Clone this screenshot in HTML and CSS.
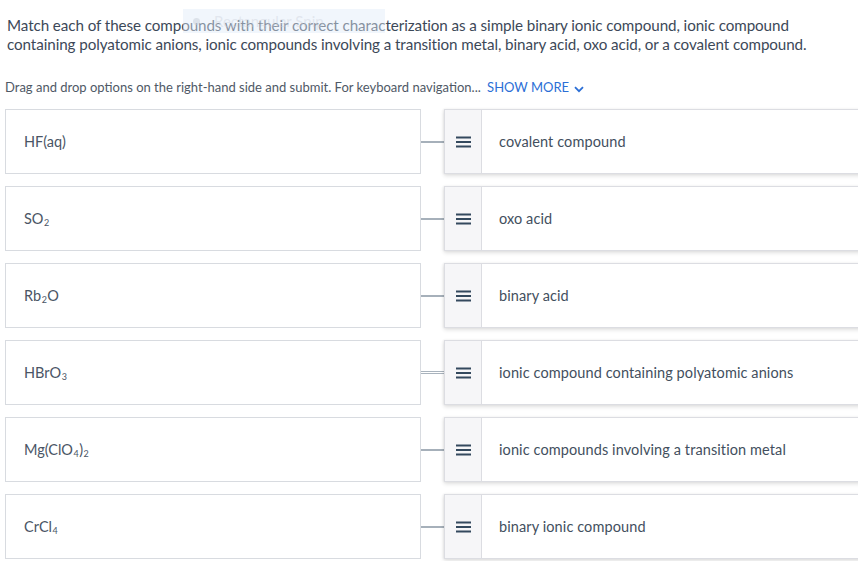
FILE: index.html
```html
<!DOCTYPE html>
<html>
<head>
<meta charset="utf-8">
<link rel="stylesheet" href="styles.css">
</head>
<body>
<div class="page">
  <div class="snip"><span class="snip-dot"></span><span class="snip-text">Rectangular Snip</span></div>
  <p class="title">Match each of these compounds with their correct characterization as a simple binary ionic compound, ionic compound containing polyatomic anions, ionic compounds involving a transition metal, binary acid, oxo acid, or a covalent compound.</p>
  <p class="hint">Drag and drop options on the right-hand side and submit. For keyboard navigation... <span class="more">SHOW MORE <svg class="chev" viewBox="0 0 10 7" width="10" height="7"><path d="M1 1.2 L5 5.2 L9 1.2" fill="none" stroke="#2c6fd6" stroke-width="1.8"/></svg></span></p>
  <div class="rows">
    <div class="row">
      <div class="left">HF(aq)</div>
      <div class="link"></div>
      <div class="right"><div class="handle"><span class="bars"></span></div><div class="label">covalent compound</div></div>
    </div>
    <div class="row">
      <div class="left">SO<sub>2</sub></div>
      <div class="link"></div>
      <div class="right"><div class="handle"><span class="bars"></span></div><div class="label">oxo acid</div></div>
    </div>
    <div class="row">
      <div class="left">Rb<sub>2</sub>O</div>
      <div class="link"></div>
      <div class="right"><div class="handle"><span class="bars"></span></div><div class="label">binary acid</div></div>
    </div>
    <div class="row">
      <div class="left">HBrO<sub>3</sub></div>
      <div class="link double"></div>
      <div class="right"><div class="handle"><span class="bars"></span></div><div class="label">ionic compound containing polyatomic anions</div></div>
    </div>
    <div class="row">
      <div class="left">Mg(ClO<sub>4</sub>)<sub>2</sub></div>
      <div class="link"></div>
      <div class="right"><div class="handle"><span class="bars"></span></div><div class="label">ionic compounds involving a transition metal</div></div>
    </div>
    <div class="row">
      <div class="left">CrCl<sub>4</sub></div>
      <div class="link"></div>
      <div class="right"><div class="handle"><span class="bars"></span></div><div class="label">binary ionic compound</div></div>
    </div>
  </div>
</div>
</body>
</html>
```

FILE: styles.css
```css
html, body {
  margin: 0;
  padding: 0;
  background: #fff;
  overflow: hidden;
}
body {
  font-family: "Lato", "Liberation Sans", sans-serif;
  color: #3f4b5a;
  width: 858px;
  height: 561px;
}
.page {
  position: relative;
  padding: 0 0 0 5px;
}
.snip {
  position: absolute;
  left: 183px;
  top: 9px;
  width: 202px;
  height: 24px;
  background: rgba(225, 236, 248, 0.45);
  display: flex;
  align-items: center;
  gap: 14px;
  padding-left: 10px;
  box-sizing: border-box;
}
.snip-dot {
  width: 7px;
  height: 7px;
  border-radius: 50%;
  background: rgba(200, 205, 215, 0.5);
}
.snip-text {
  font-size: 15px;
  color: rgba(200, 205, 215, 0.4);
}
.title {
  margin: 0;
  padding: 16px 0 0 2px;
  font-size: 15.2px;
  line-height: 19px;
  letter-spacing: -0.08px;
  color: #3c4858;
  width: 840px;
}
.hint {
  margin: 0;
  padding-top: 25px;
  font-size: 13px;
  line-height: 16px;
  letter-spacing: 0;
  color: #4f5966;
}
.more {
  color: #2c6fd6;
  margin-left: 3px;
}
.chev {
  vertical-align: -1px;
  margin-left: 2px;
}
.rows {
  margin-top: 14px;
  display: flex;
  flex-direction: column;
  gap: 12px;
}
.row {
  display: flex;
  align-items: center;
  height: 65px;
}
.left {
  width: 416px;
  flex-shrink: 0;
  height: 65px;
  box-sizing: border-box;
  border: 1px solid #d8dbe0;
  display: flex;
  align-items: center;
  padding-left: 18px;
  font-size: 14.5px;
  color: #4a5565;
  letter-spacing: 0;
}
sub {
  font-size: 9px;
  position: relative;
  top: 4px;
  vertical-align: baseline;
  line-height: 0;
  margin: 0 0.5px;
}
.link {
  width: 23px;
  flex-shrink: 0;
  height: 2px;
  background: #a6b0ba;
}
.link.double {
  height: 1px;
  border-top: 1px solid #a9b3bd;
  border-bottom: 1px solid #a9b3bd;
  background: #fff;
}
.right {
  width: 430px;
  flex-shrink: 0;
  height: 65px;
  box-sizing: border-box;
  border: 1px solid #dcdde2;
  border-right: none;
  box-shadow: 0 2px 4px rgba(0, 0, 0, 0.12), -1px 0 2px rgba(0, 0, 0, 0.06);
  display: flex;
  background: #fff;
}
.handle {
  width: 36px;
  flex-shrink: 0;
  background: #f6f6f8;
  border-right: 1px solid #dcdde2;
  display: flex;
  align-items: center;
  justify-content: center;
}
.bars {
  display: block;
  width: 15px;
  height: 2px;
  background: #34495e;
  box-shadow: 0 -4.5px 0 #34495e, 0 4.5px 0 #34495e;
  margin-left: 1px;
}
.label {
  display: flex;
  align-items: center;
  padding-left: 17px;
  font-size: 14.5px;
  color: #434f5e;
  letter-spacing: 0.1px;
}
```
